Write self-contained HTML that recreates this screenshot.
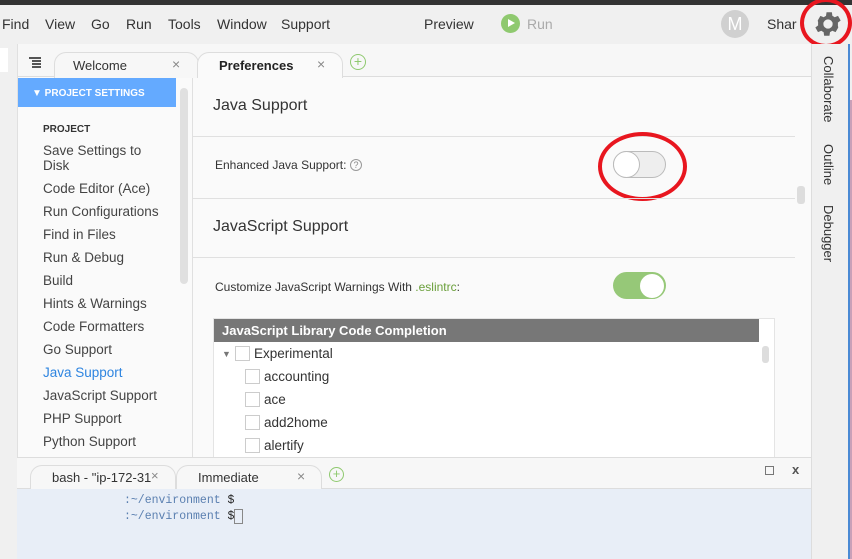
<!DOCTYPE html>
<html><head><style>
*{margin:0;padding:0;box-sizing:border-box}
body{width:852px;height:559px;overflow:hidden;position:relative;background:#f0f0f0;font-family:"Liberation Sans",sans-serif;color:#333}
.a{position:absolute}
.menu span{position:absolute;top:16px;font-size:14px;color:#333}
.side div{position:absolute;left:43px;font-size:13.5px;color:#444}
.chk{position:absolute;width:15px;height:15px;border:1px solid #ccc;background:#fff}
.lib{position:absolute;font-size:13.5px;color:#333}
</style></head><body>
<div class="a" style="left:0;top:0;width:852px;height:5px;background:#333"></div>
<div class="menu">
<span style="left:2px">Find</span><span style="left:45px">View</span><span style="left:91px">Go</span><span style="left:126px">Run</span><span style="left:168px">Tools</span><span style="left:217px">Window</span><span style="left:281px">Support</span>
<span style="left:424px">Preview</span><span style="left:527px;color:#aaa">Run</span><span style="left:767px">Shar</span>
</div>
<div class="a" style="left:501px;top:14px;width:19px;height:19px;border-radius:50%;background:#8fc96f"></div>
<div class="a" style="left:508px;top:19px;width:0;height:0;border-left:7px solid #fff;border-top:4.5px solid transparent;border-bottom:4.5px solid transparent"></div>
<div class="a" style="left:721px;top:10px;width:28px;height:28px;border-radius:50%;background:#d0d0d0;color:#fff;font-size:18px;text-align:center;line-height:28px">M</div>
<svg class="a" style="left:812px;top:8px" width="32" height="32" viewBox="0 0 24 24"><path fill="#666" d="M19.4 13a7.5 7.5 0 0 0 0-2l2.1-1.6-2-3.5-2.5 1a7 7 0 0 0-1.7-1l-.4-2.7h-4l-.4 2.7a7 7 0 0 0-1.7 1l-2.5-1-2 3.5L4.6 11a7.5 7.5 0 0 0 0 2l-2.1 1.6 2 3.5 2.5-1a7 7 0 0 0 1.7 1l.4 2.7h4l.4-2.7a7 7 0 0 0 1.7-1l2.5 1 2-3.5zM12 15.5a3.5 3.5 0 1 1 0-7 3.5 3.5 0 0 1 0 7z"/></svg>
<div class="a" style="left:800px;top:-2px;width:52px;height:50px;border:4px solid #e8161f;border-radius:50%"></div>
<div class="a" style="left:811px;top:44px;width:37px;height:515px;background:#f0f0f0;border-left:1px solid #ddd"></div>
<div class="a" style="left:848px;top:44px;width:2px;height:515px;background:#4a8ad4"></div>
<div class="a" style="left:850px;top:100px;width:2px;height:459px;background:#c9a0b8"></div>
<div class="a" style="left:821px;top:56px;writing-mode:vertical-rl;font-size:13px;color:#333">Collaborate</div>
<div class="a" style="left:821px;top:144px;writing-mode:vertical-rl;font-size:13px;color:#333">Outline</div>
<div class="a" style="left:821px;top:205px;writing-mode:vertical-rl;font-size:13px;color:#333">Debugger</div>
<div class="a" style="left:0;top:48px;width:8px;height:24px;background:#fff"></div>
<div class="a" style="left:17px;top:44px;width:794px;height:414px;background:#fafafa;border-left:1px solid #e0e0e0"></div>
<div class="a" style="left:18px;top:44px;width:793px;height:33px;background:#f7f7f7;border-bottom:1px solid #ddd"></div>
<svg class="a" style="left:28px;top:57px" width="14" height="11"><path d="M1 1h12M4 4h9M4 7h9M4 10h9" stroke="#555" stroke-width="2"/></svg>
<div class="a" style="left:54px;top:52px;width:145px;height:26px;background:#f7f7f7;border:1px solid #ddd;border-bottom:none;border-radius:12px 12px 0 0"></div>
<div class="a" style="left:73px;top:58px;font-size:13px;color:#333">Welcome</div>
<div class="a" style="left:172px;top:56px;font-size:14px;color:#888">×</div>
<div class="a" style="left:197px;top:52px;width:146px;height:26px;background:#fafafa;border:1px solid #ddd;border-bottom:none;border-radius:12px 12px 0 0"></div>
<div class="a" style="left:219px;top:58px;font-size:13px;font-weight:bold;color:#222">Preferences</div>
<div class="a" style="left:317px;top:56px;font-size:14px;color:#888">×</div>
<div class="a" style="left:350px;top:54px;width:16px;height:16px;border:1.5px solid #8fc96f;border-radius:50%;color:#8fc96f;font-size:14px;line-height:12px;text-align:center">+</div>
<div class="a" style="left:18px;top:78px;width:158px;height:29px;background:#64aaff;color:#fff;font-size:10px;font-weight:bold;padding:10px 0 0 14px">▼ PROJECT SETTINGS</div>
<div class="a" style="left:180px;top:88px;width:8px;height:196px;background:#e0e0e0;border-radius:4px"></div>
<div class="a" style="left:192px;top:78px;width:1px;height:380px;background:#e0e0e0"></div>
<div class="side">
<div style="top:124px;font-size:10px;font-weight:bold;color:#333">PROJECT</div>
<div style="top:143px;line-height:15px">Save Settings to<br>Disk</div>
<div style="top:181px">Code Editor (Ace)</div>
<div style="top:204px">Run Configurations</div>
<div style="top:227px">Find in Files</div>
<div style="top:250px">Run &amp; Debug</div>
<div style="top:273px">Build</div>
<div style="top:296px">Hints &amp; Warnings</div>
<div style="top:319px">Code Formatters</div>
<div style="top:342px">Go Support</div>
<div style="top:365px;color:#2f85e0">Java Support</div>
<div style="top:388px">JavaScript Support</div>
<div style="top:411px">PHP Support</div>
<div style="top:434px">Python Support</div>
</div>
<div class="a" style="left:213px;top:97px;font-size:16px;color:#333">Java Support</div>
<div class="a" style="left:193px;top:136px;width:602px;height:1px;background:#e0e0e0"></div>
<div class="a" style="left:215px;top:158px;font-size:12px;color:#333">Enhanced Java Support:</div>
<div class="a" style="left:350px;top:159px;width:12px;height:12px;border:1px solid #999;border-radius:50%;font-size:9px;color:#888;text-align:center;line-height:10px">?</div>
<div class="a" style="left:613px;top:151px;width:53px;height:27px;border-radius:14px;background:#eee;border:1px solid #bbb"></div>
<div class="a" style="left:613px;top:151px;width:27px;height:27px;border-radius:50%;background:#fff;border:1px solid #bbb"></div>
<div class="a" style="left:598px;top:132px;width:89px;height:69px;border:4px solid #e8161f;border-radius:50%"></div>
<div class="a" style="left:193px;top:198px;width:602px;height:1px;background:#e0e0e0"></div>
<div class="a" style="left:797px;top:186px;width:8px;height:18px;background:#ddd;border-radius:3px"></div>
<div class="a" style="left:213px;top:218px;font-size:16px;color:#333">JavaScript Support</div>
<div class="a" style="left:193px;top:257px;width:602px;height:1px;background:#e0e0e0"></div>
<div class="a" style="left:215px;top:280px;font-size:12px;color:#333">Customize JavaScript Warnings With <span style="color:#6a9f3a">.eslintrc</span>:</div>
<div class="a" style="left:613px;top:272px;width:53px;height:27px;border-radius:14px;background:#96c878"></div>
<div class="a" style="left:639px;top:273px;width:26px;height:26px;border-radius:50%;background:#fff;border:1px solid #96c878"></div>
<div class="a" style="left:213px;top:318px;width:562px;height:140px;background:#fff;border:1px solid #e4e4e4"></div>
<div class="a" style="left:214px;top:319px;width:545px;height:23px;background:#777;color:#fff;font-size:13px;font-weight:bold;padding:4px 0 0 8px">JavaScript Library Code Completion</div>
<div class="a" style="left:762px;top:346px;width:7px;height:17px;background:#ddd;border-radius:3px"></div>
<div class="a" style="left:222px;top:349px;font-size:9px;color:#777">▼</div>
<div class="chk" style="left:235px;top:346px"></div>
<div class="lib" style="left:254px;top:346px">Experimental</div>
<div class="chk" style="left:245px;top:369px"></div><div class="lib" style="left:264px;top:369px">accounting</div>
<div class="chk" style="left:245px;top:392px"></div><div class="lib" style="left:264px;top:392px">ace</div>
<div class="chk" style="left:245px;top:415px"></div><div class="lib" style="left:264px;top:415px">add2home</div>
<div class="chk" style="left:245px;top:438px"></div><div class="lib" style="left:264px;top:438px">alertify</div>
<div class="a" style="left:17px;top:457px;width:794px;height:32px;background:#f7f7f7;border-top:1px solid #ddd;border-bottom:1px solid #ddd"></div>
<div class="a" style="left:30px;top:465px;width:146px;height:24px;background:#f7f7f7;border:1px solid #ddd;border-bottom:none;border-radius:12px 12px 0 0"></div>
<div class="a" style="left:52px;top:470px;font-size:13px;color:#333">bash - "ip-172-31</div>
<div class="a" style="left:151px;top:468px;font-size:13px;color:#888">×</div>
<div class="a" style="left:176px;top:465px;width:146px;height:24px;background:#f7f7f7;border:1px solid #ddd;border-bottom:none;border-radius:12px 12px 0 0"></div>
<div class="a" style="left:198px;top:470px;font-size:13px;color:#333">Immediate</div>
<div class="a" style="left:297px;top:468px;font-size:14px;color:#888">×</div>
<div class="a" style="left:329px;top:467px;width:15px;height:15px;border:1.5px solid #8fc96f;border-radius:50%;color:#8fc96f;font-size:13px;line-height:11px;text-align:center">+</div>
<div class="a" style="left:765px;top:466px;width:9px;height:9px;border:1px solid #777"></div>
<div class="a" style="left:792px;top:462px;font-size:13px;font-weight:bold;color:#555">x</div>
<div class="a" style="left:17px;top:489px;width:794px;height:70px;background:#e8eef7"></div>
<div class="a" style="left:124px;top:493px;font-family:'Liberation Mono',monospace;font-size:11.5px;color:#5a7fb0;line-height:16px">:~/environment <span style="color:#222">$</span><br>:~/environment <span style="color:#222">$</span></div>
<div class="a" style="left:234px;top:509px;width:9px;height:15px;border:1px solid #888"></div>
</body></html>
